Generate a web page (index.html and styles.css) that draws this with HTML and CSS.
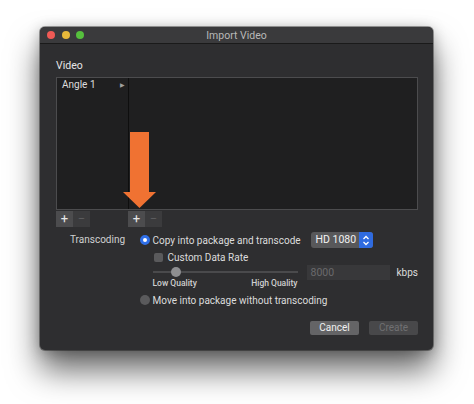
FILE: index.html
```html
<!DOCTYPE html>
<html lang="en">
<head>
  <meta charset="UTF-8">
  <title>Import Video</title>
  <link rel="stylesheet" href="styles.css">
</head>
<body>
  <div class="window">
    <div class="titlebar">
      <div class="lights">
        <span class="light red"></span>
        <span class="light yellow"></span>
        <span class="light green"></span>
      </div>
      <div class="title">Import Video</div>
    </div>

    <div class="content">
      <div class="section-label">Video</div>

      <div class="angles">
        <div class="angle-list">
          <div class="angle-item">Angle 1 <span class="disclosure">&#9654;</span></div>
        </div>
        <div class="clip-list"></div>
      </div>

      <div class="list-tools">
        <div class="tool-pair">
          <button class="tool add">+</button>
          <button class="tool remove">&minus;</button>
        </div>
        <div class="tool-pair">
          <button class="tool add">+</button>
          <button class="tool remove">&minus;</button>
        </div>
      </div>

      <!-- callout pointing at the clip add button -->
      <svg class="arrow" width="34" height="77" viewBox="0 0 34 77">
        <polygon points="7,0 26,0 26,60 33,60 16.5,76 0,60 7,60" fill="#f07232"/>
      </svg>

      <div class="options">
        <div class="opt-label">Transcoding</div>
        <div class="opt-body">
          <div class="opt-row">
            <span class="radio on"></span>
            <span>Copy into package and transcode</span>
            <div class="popup">
              <span class="popup-text">HD 1080</span>
              <span class="stepper">
                <svg width="8" height="11" viewBox="0 0 8 11">
                  <polyline points="1.5,4 4,1.5 6.5,4" fill="none" stroke="#fff" stroke-width="1.3"/>
                  <polyline points="1.5,7 4,9.5 6.5,7" fill="none" stroke="#fff" stroke-width="1.3"/>
                </svg>
              </span>
            </div>
          </div>

          <div class="opt-row sub">
            <span class="check"></span>
            <span>Custom Data Rate</span>
          </div>

          <div class="rate-row">
            <div class="slider-box">
              <div class="slider">
                <span class="track"></span>
                <span class="knob"></span>
              </div>
              <div class="slider-labels">
                <span>Low Quality</span>
                <span>High Quality</span>
              </div>
            </div>
            <div class="rate-field">8000</div>
            <span class="unit">kbps</span>
          </div>

          <div class="opt-row move">
            <span class="radio"></span>
            <span>Move into package without transcoding</span>
          </div>
        </div>
      </div>

      <div class="actions">
        <button class="btn cancel">Cancel</button>
        <button class="btn create">Create</button>
      </div>
    </div>
  </div>
</body>
</html>
```

FILE: styles.css
```css
html, body { height: 100%; }

body {
  margin: 0;
  padding: 27px 0 0 40px;
  box-sizing: border-box;
  background: #ffffff;
  font-family: "Roboto", "Liberation Sans", sans-serif;
  font-size: 10px;
  color: #dcdcdc;
}

.window {
  width: 393px;
  height: 323px;
  background: #2e2e30;
  border-radius: 5px;
  box-shadow: 0 0 0 1px rgba(0, 0, 0, 0.35), 0 20px 32px rgba(0, 0, 0, 0.6), 0 2px 14px rgba(0, 0, 0, 0.25);
  overflow: hidden;
}

.titlebar {
  height: 16px;
  background: #3a3a3c;
  border-bottom: 1px solid #1a1a1a;
  display: flex;
  align-items: center;
  padding: 0 7px;
}
.lights { display: flex; gap: 6.5px; width: 60px; }
.light { width: 8px; height: 8px; border-radius: 50%; }
.light.red { background: #f05a55; }
.light.yellow { background: #e7b83a; }
.light.green { background: #56bf3d; }
.title { flex: 1; text-align: center; color: #b8b8b8; margin-right: 60px; font-size: 10.5px; }

.content { position: relative; padding: 15px 15px 0 16px; }

.section-label { line-height: 14px; color: #e6e6e6; font-size: 10.5px; }

.angles {
  margin-top: 4px;
  height: 131px;
  border: 1px solid #4c4c4e;
  background: #1f1f20;
  display: flex;
}
.angle-list { width: 71px; border-right: 1px solid #0e0e0e; }
.angle-item {
  display: flex;
  justify-content: space-between;
  align-items: center;
  padding: 1px 3px 0 5px;
  line-height: 12px;
  color: #dedede;
}
.disclosure { font-size: 6px; color: #a0a0a0; }
.clip-list { flex: 1; }

.list-tools { display: flex; gap: 38px; margin-top: 1px; height: 16px; }
.tool-pair { display: flex; }
.tool {
  width: 17px;
  height: 16px;
  padding: 0;
  border: none;
  font-family: inherit;
  font-size: 13px;
  line-height: 16px;
}
.tool.add { background: #4c4c4e; color: #e6e6e6; }
.tool.remove { background: #3b3b3d; color: #5c5c5e; }

.arrow { position: absolute; left: 83px; top: 88px; }

.options { display: flex; margin-top: 5px; }
.opt-label { width: 70px; padding-left: 14px; line-height: 16px; color: #d0d0d0; }
.opt-row { display: flex; align-items: center; gap: 3px; height: 16px; white-space: nowrap; }
.opt-row.sub { margin: 2px 0 0 14px; height: 14px; gap: 5px; }
.opt-row.move { margin-top: 5px; height: 14px; }

.radio {
  width: 10px;
  height: 10px;
  border-radius: 50%;
  background: #5a5a5c;
  box-sizing: border-box;
}
.radio.on {
  border: 3px solid #2f6fe8;
  background: #ffffff;
}
.check { width: 9px; height: 9px; border-radius: 2px; background: #5a5a5c; }

.popup {
  display: flex;
  height: 16px;
  margin-left: 7px;
  border-radius: 3px;
  overflow: hidden;
  background: #58585a;
}
.popup-text { width: 43px; padding-left: 5px; line-height: 16px; color: #f2f2f2; font-size: 10.5px; }
.stepper {
  width: 14px;
  background: #2f6be0;
  display: flex;
  align-items: center;
  justify-content: center;
}

.rate-row { display: flex; align-items: flex-start; margin: 1px 0 0 13px; }
.slider-box { width: 145px; }
.slider { position: relative; height: 14px; }
.track { position: absolute; left: 0; right: 0; top: 6px; height: 2px; background: #4a4a4c; }
.knob {
  position: absolute;
  left: 18px;
  top: 2px;
  width: 10px;
  height: 10px;
  border-radius: 50%;
  background: #8e8e90;
}
.slider-labels {
  display: flex;
  justify-content: space-between;
  font-size: 8.5px;
  font-weight: 500;
  line-height: 9px;
  color: #cfcfcf;
}
.rate-field {
  width: 79px;
  height: 15px;
  margin-left: 9px;
  padding-left: 4px;
  background: #38383a;
  color: #6a6a6c;
  font-size: 10.5px;
  line-height: 15px;
}
.unit { margin-left: 7px; line-height: 15px; color: #dcdcdc; }

.actions { display: flex; justify-content: flex-end; gap: 10px; margin-top: 14px; }
.btn {
  width: 49px;
  height: 14px;
  padding: 0;
  border: none;
  border-radius: 2px;
  font-family: inherit;
  font-size: 10px;
  line-height: 14px;
}
.btn.cancel { background: #646466; color: #f0f0f0; }
.btn.create { background: #48484a; color: #707072; }
```
